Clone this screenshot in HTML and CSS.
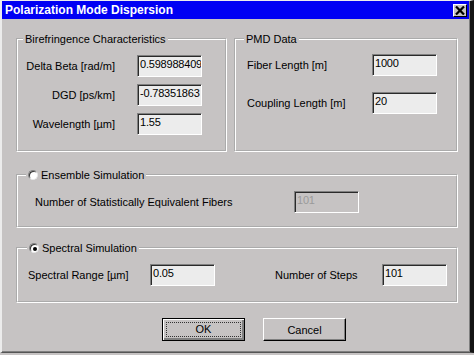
FILE: index.html
```html
<!DOCTYPE html>
<html lang="en">
<head>
  <meta charset="UTF-8" />
  <title>Polarization Mode Dispersion</title>
  <link rel="stylesheet" href="styles.css">
</head>
<body>

  <div class="window">
    <div class="titlebar">
      <span class="title">Polarization Mode Dispersion</span>
      <span class="close">
        <svg width="10" height="9" viewBox="0 0 10 9"><path d="M1 0.5 L9 8.5 M9 0.5 L1 8.5" stroke="#000" stroke-width="2.2"/></svg>
      </span>
    </div>

    <div class="content">
      <div class="top-row">
        <fieldset class="group biref">
          <legend>Birefringence Characteristics</legend>
          <div class="grid">
            <label>Delta Beta [rad/m]</label><div class="field">0.598988409</div>
            <label>DGD [ps/km]</label><div class="field">-0.78351863</div>
            <label>Wavelength [µm]</label><div class="field">1.55</div>
          </div>
        </fieldset>

        <fieldset class="group pmd">
          <legend>PMD Data</legend>
          <div class="row"><label>Fiber Length [m]</label><div class="field">1000</div></div>
          <div class="row"><label>Coupling Length [m]</label><div class="field">20</div></div>
        </fieldset>
      </div>

      <fieldset class="group ensemble">
        <legend><span class="radio"></span>Ensemble Simulation</legend>
        <div class="row"><label>Number of Statistically Equivalent Fibers</label><div class="field disabled">101</div></div>
      </fieldset>

      <fieldset class="group spectral">
        <legend><span class="radio checked"></span>Spectral Simulation</legend>
        <div class="row">
          <label class="range-label">Spectral Range [µm]</label><div class="field">0.05</div>
          <label class="steps-label">Number of Steps</label><div class="field">101</div>
        </div>
      </fieldset>

      <div class="buttons">
        <button class="btn default"><span>OK</span></button>
        <button class="btn">Cancel</button>
      </div>
    </div>
  </div>

</body>
</html>
```

FILE: styles.css
```css
* {
  margin: 0;
  padding: 0;
  box-sizing: border-box;
}
body {
  background: #c6c3c3;
  font-family: "Liberation Sans", Arial, sans-serif;
  font-size: 11px;
  color: #000;
}
.window {
  width: 474px;
  height: 353px;
  background: #c6c3c3;
  border-left: 2px solid #ececec;
  border-top: 1px solid #ececec;
  border-right: 4px solid #141414;
  border-bottom: 1px solid #555;
  box-shadow: inset -1px -1px 0 #808080;
}
.titlebar {
  height: 18px;
  margin-right: 1px;
  background: #0000f4;
  color: #fff;
  display: flex;
  align-items: center;
  justify-content: space-between;
  padding: 0 2px 0 3px;
}
.title {
  font-weight: bold;
  font-size: 12px;
}
.close {
  width: 14px;
  height: 13px;
  background: #c6c3c3;
  border: 1px solid;
  border-color: #fff #000 #000 #fff;
  display: flex;
  align-items: center;
  justify-content: center;
}
.content {
  padding: 13px 0 0 14px;
}
.top-row {
  display: flex;
  gap: 7px;
}

/* etched group boxes */
.group {
  border: 2px groove #fff;
  min-width: 0;
}
.group legend {
  padding: 0 2px;
  display: flex;
  align-items: center;
  line-height: 14px;
}
.biref {
  width: 211px;
  height: 120px;
}
.biref legend { margin-left: 5px; }
.pmd {
  width: 224px;
  height: 120px;
}
.pmd legend { margin-left: 8px; }
.ensemble {
  width: 442px;
  height: 60px;
  margin-top: 16px;
}
.ensemble legend { margin-left: 8px; }
.spectral {
  width: 442px;
  height: 62px;
  margin-top: 13px;
}
.spectral legend { margin-left: 9px; }

.grid {
  display: grid;
  grid-template-columns: 97px 65px;
  column-gap: 22px;
  row-gap: 7px;
  padding-top: 9px;
  align-items: center;
}
.grid label {
  text-align: right;
}
.row {
  display: flex;
  align-items: center;
}
.pmd .row {
  justify-content: space-between;
  padding: 0 19px 0 11px;
  margin-top: 8px;
}
.pmd .row + .row {
  margin-top: 16px;
}
.ensemble .row {
  padding: 9px 0 0 17px;
}
.ensemble label {
  width: 259px;
}
.spectral .row {
  padding: 9px 0 0 10px;
}
.range-label { width: 122px; }
.steps-label { margin-left: 60px; width: 107px; }

.field {
  width: 65px;
  height: 22px;
  background: #ececec;
  border: 1px solid;
  border-color: #808080 #fff #fff #808080;
  box-shadow: inset 1px 1px 0 #2a2a2a;
  padding: 2px 0 0 2px;
  letter-spacing: -0.2px;
  white-space: nowrap;
  overflow: hidden;
}
.field.disabled {
  background: #c6c3c3;
  color: #9a9a9a;
}

.radio {
  width: 10px;
  height: 10px;
  border-radius: 50%;
  background: #fff;
  border: 1px solid;
  border-color: #808080 #e8e8e8 #e8e8e8 #808080;
  box-shadow: inset 1px 1px 0 #333;
  margin-right: 3px;
  position: relative;
}
.radio.checked::after {
  content: "";
  position: absolute;
  left: 3px;
  top: 3px;
  width: 4px;
  height: 4px;
  border-radius: 50%;
  background: #000;
}

.buttons {
  display: flex;
  gap: 18px;
  margin: 15px 0 0 146px;
}
.btn {
  width: 83px;
  height: 23px;
  background: #c6c3c3;
  font-family: inherit;
  font-size: 11px;
  color: #000;
  border: 1px solid;
  border-color: #fff #000 #000 #fff;
  box-shadow: inset -1px -1px 0 #808080;
}
.btn.default {
  border: 1px solid #000;
  box-shadow: inset 1px 1px 0 #fff, inset -2px -2px 0 #808080;
  padding: 3px;
}
.btn.default span {
  display: block;
  height: 100%;
  border: 1px dotted #333;
  line-height: 13px;
}
```
